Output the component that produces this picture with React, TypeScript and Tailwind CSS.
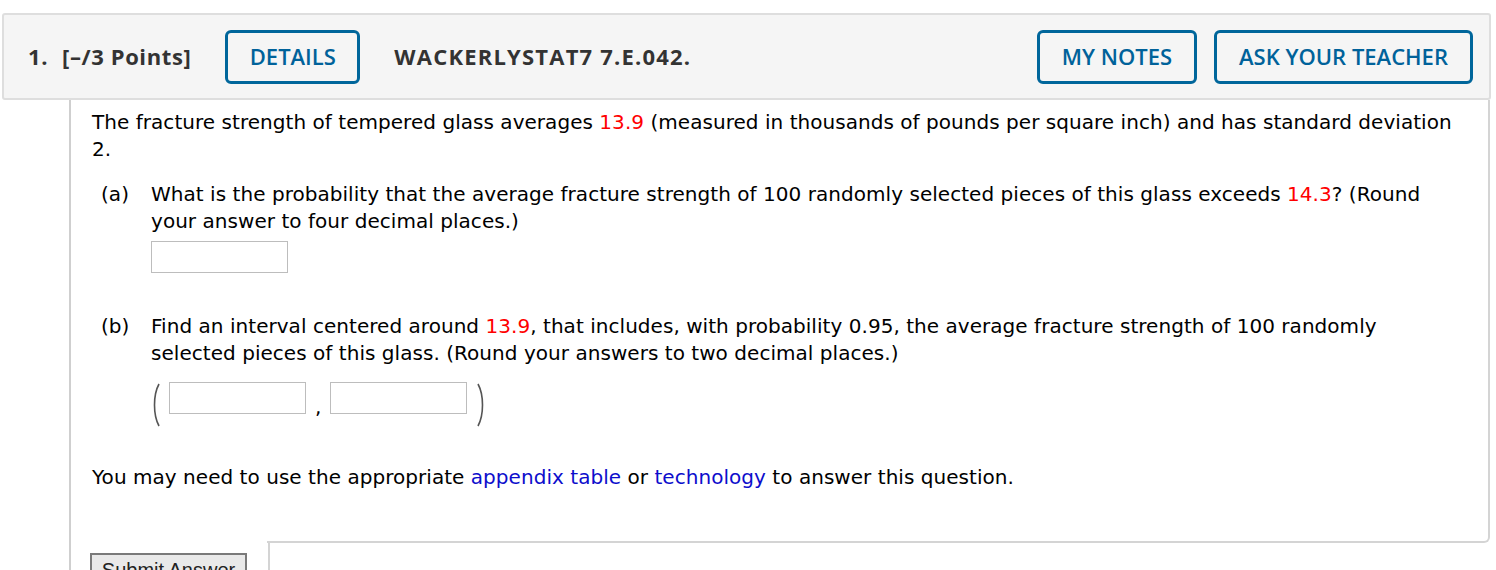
import { useState } from 'react'

const red = 'text-[#ff0000]'
const link = 'text-[#0d0dcc]'

function AnswerBox() {
    const [val, setVal] = useState('')
    return (
        <input
            value={val}
            onChange={(e) => setVal(e.target.value)}
            className="w-[137px] h-[32px] border border-[#bdbdbd] bg-white outline-none px-1"
        />
    )
}

function Paren({ flip }: { flip?: boolean }) {
    return (
        <svg width="10" height="44" viewBox="0 0 10 44" className="shrink-0">
            <path
                d={flip ? 'M2 1 C8 12 8 32 2 43' : 'M8 1 C2 12 2 32 8 43'}
                fill="none"
                stroke="#555"
                strokeWidth="1.6"
            />
        </svg>
    )
}

function HeaderButton({ label, w }: { label: string; w: string }) {
    return (
        <button
            className={`${w} h-[54px] rounded-[6px] border-[3px] border-[#00669b] text-[#00629a] text-[22px] font-semibold flex items-center justify-center`}
        >
            {label}
        </button>
    )
}

export default function App() {
    return (
        <div className="w-[1496px] h-[570px] overflow-hidden bg-white pt-[13px] text-black">
            {/* question header */}
            <div className="ml-[2px] w-[1489px] h-[87px] bg-[#f5f5f5] border-2 border-[#dedede] rounded-[3px] flex items-center pl-[24px] pr-[16px] font-['Open_Sans',sans-serif] text-[#333]">
                <div className="text-[22px] font-bold tracking-[0.6px] flex gap-[14px]">
                    <span>1.</span>
                    <span>[–/3 Points]</span>
                </div>
                <div className="ml-[34px]">
                    <HeaderButton label="DETAILS" w="w-[135px]" />
                </div>
                <div className="ml-[34px] text-[22px] font-bold tracking-[1.2px]">
                    WACKERLYSTAT7 7.E.042.
                </div>
                <div className="ml-auto flex gap-[17px]">
                    <HeaderButton label="MY NOTES" w="w-[160px]" />
                    <HeaderButton label="ASK YOUR TEACHER" w="w-[259px]" />
                </div>
            </div>

            {/* question body */}
            <div className="ml-[69px] w-[1421px] border-l-2 border-[#cfcfcf] font-['DejaVu_Sans',sans-serif] text-[20px] tracking-[0.04px] leading-[27px]">
                <div className="border-r-2 border-[#d4d4d4] pl-[21px] pr-[24px] pt-[9px] pb-[38px]">
                    <p>
                        The fracture strength of tempered glass averages{' '}
                        <span className={red}>13.9</span> (measured in
                        thousands of pounds per square inch) and has standard
                        deviation 2.
                    </p>

                    <div className="flex mt-[18px]">
                        <div className="w-[59px] shrink-0 pl-[9px]">(a)</div>
                        <div>
                            <p>
                                What is the probability that the average
                                fracture strength of 100 randomly selected
                                pieces of this glass exceeds{' '}
                                <span className={red}>14.3</span>? (Round your
                                answer to four decimal places.)
                            </p>
                            <div className="mt-[6px] flex">
                                <AnswerBox />
                            </div>
                        </div>
                    </div>

                    <div className="flex mt-[40px]">
                        <div className="w-[59px] shrink-0 pl-[9px]">(b)</div>
                        <div>
                            <p>
                                Find an interval centered around{' '}
                                <span className={red}>13.9</span>, that
                                includes, with probability 0.95, the average
                                fracture strength of 100 randomly selected
                                pieces of this glass. (Round your answers to
                                two decimal places.)
                            </p>
                            <div className="mt-[15px] flex items-start">
                                <div className="mt-[1px]">
                                    <Paren />
                                </div>
                                <div className="ml-[8px]">
                                    <AnswerBox />
                                </div>
                                <span className="mx-[9px] mt-[12px]">,</span>
                                <AnswerBox />
                                <div className="ml-[9px] mt-[1px]">
                                    <Paren flip />
                                </div>
                            </div>
                        </div>
                    </div>

                    <p className="mt-[37px]">
                        You may need to use the appropriate{' '}
                        <a className={link}>appendix table</a> or{' '}
                        <a className={link}>technology</a> to answer this
                        question.
                    </p>
                </div>

                {/* corner piece where the body closes */}
                <div className="flex">
                    <div className="w-[196px] shrink-0" />
                    <div className="flex-1 h-[14px] border-r-2 border-b-2 border-[#d4d4d4] rounded-br-[6px]" />
                </div>

                <div className="flex items-start">
                    <button className="ml-[19px] mt-[10px] w-[157px] h-[34px] bg-[#e9e9e9] border-2 border-[#7a7a7a] font-['Liberation_Sans',Arial,sans-serif] text-[20px] tracking-normal text-[#222] leading-[30px]">
                        Submit Answer
                    </button>
                    <div className="ml-[21px] flex-1 h-[40px] border-l-2 border-[#d4d4d4]" />
                </div>
            </div>
        </div>
    )
}
